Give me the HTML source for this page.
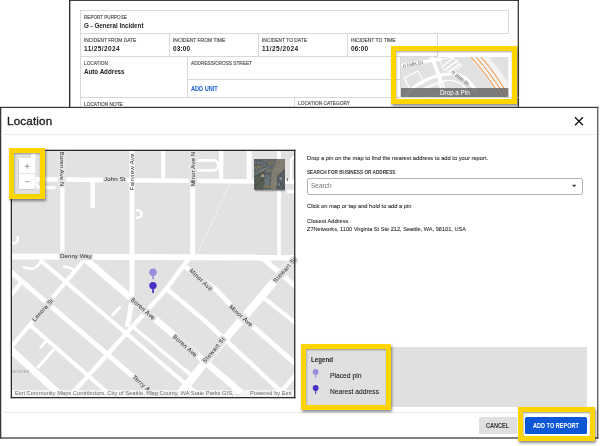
<!DOCTYPE html>
    <html><head><meta charset="utf-8"><title>Location</title>
    <style>
    html,body{margin:0;padding:0;}
    body{width:600px;height:446px;position:relative;overflow:hidden;background:#fff;
     font-family:"Liberation Sans",sans-serif;}
    .b{position:absolute;box-sizing:content-box;}
    .t{opacity:0.999;position:absolute;white-space:nowrap;line-height:1;}
    .s{transform-origin:0 0;transform:scale(0.25);}
    .rl{transform-origin:50% 50%;}
    .yb{box-shadow:0.5px 1.5px 2.5px rgba(0,0,0,0.45), inset 0.5px 1px 2px rgba(0,0,0,0.35);}
    svg{position:absolute;left:0;top:0;overflow:hidden;}
    </style></head><body>
    <svg width="600" height="110" viewBox="0 0 600 110"><g fill="#2a2a2a"><rect x="69" y="0" width="1.35" height="108"/><rect x="69" y="0" width="450" height="0.9"/><rect x="517.7" y="0" width="1.2" height="108"/></g></svg>
<div class="b" style="left:80px;top:10px;width:428px;height:23px;border:1px solid #d9d9d9;width:427px;height:22px;"></div>
<div class="b" style="left:80px;top:33px;width:357px;height:23px;border:1px solid #d9d9d9;border-top:none;width:356px;height:23px;"></div>
<div class="b" style="left:169px;top:33px;width:1px;height:23px;background:#d9d9d9;"></div>
<div class="b" style="left:258px;top:33px;width:1px;height:23px;background:#d9d9d9;"></div>
<div class="b" style="left:347px;top:33px;width:1px;height:23px;background:#d9d9d9;"></div>
<div class="b" style="left:80px;top:56px;width:321px;height:41px;border-left:1px solid #d9d9d9;border-bottom:1px solid #d9d9d9;width:320px;height:41px;"></div>
<div class="b" style="left:187px;top:56px;width:1px;height:41px;background:#d9d9d9;"></div>
<div class="b" style="left:188px;top:79px;width:212px;height:1px;background:#d9d9d9;"></div>
<div class="b" style="left:399.5px;top:56px;width:1.0px;height:41px;background:#d9d9d9;"></div>
<div class="b" style="left:80px;top:97px;width:1px;height:10px;background:#d9d9d9;"></div>
<div class="b" style="left:294px;top:97px;width:1px;height:10px;background:#d9d9d9;"></div>
<div class="b" style="left:80px;top:97px;width:439px;height:1px;background:#d9d9d9;"></div>
<span class="t s" style="left:84.00px;top:14.06px;font-size:22.40px;color:#5a5a5a;transform:scale(0.2056,0.25);-webkit-text-stroke:0.80px #5a5a5a;">REPORT PURPOSE</span>
<span class="t s" style="left:84.00px;top:21.80px;font-size:26.00px;color:#222;transform:scale(0.2408,0.25);font-weight:bold;">G - General Incident</span>
<span class="t s" style="left:84.00px;top:37.16px;font-size:22.40px;color:#5a5a5a;transform:scale(0.2163,0.25);-webkit-text-stroke:0.80px #5a5a5a;">INCIDENT FROM DATE</span>
<span class="t s" style="left:84.00px;top:44.90px;font-size:26.00px;color:#222;font-weight:bold;letter-spacing:1.477px;">11/25/2024</span>
<span class="t s" style="left:173.00px;top:37.16px;font-size:22.40px;color:#5a5a5a;transform:scale(0.2205,0.25);-webkit-text-stroke:0.80px #5a5a5a;">INCIDENT FROM TIME</span>
<span class="t s" style="left:173.00px;top:44.90px;font-size:26.00px;color:#222;font-weight:bold;letter-spacing:0.475px;">03:00</span>
<span class="t s" style="left:262.00px;top:37.16px;font-size:22.40px;color:#5a5a5a;transform:scale(0.2183,0.25);-webkit-text-stroke:0.80px #5a5a5a;">INCIDENT TO DATE</span>
<span class="t s" style="left:262.00px;top:44.90px;font-size:26.00px;color:#222;font-weight:bold;letter-spacing:1.789px;">11/25/2024</span>
<span class="t s" style="left:351.20px;top:37.16px;font-size:22.40px;color:#5a5a5a;transform:scale(0.2212,0.25);-webkit-text-stroke:0.80px #5a5a5a;">INCIDENT TO TIME</span>
<span class="t s" style="left:351.20px;top:44.90px;font-size:26.00px;color:#222;font-weight:bold;letter-spacing:0.575px;">06:00</span>
<span class="t s" style="left:84.00px;top:59.86px;font-size:22.40px;color:#5a5a5a;transform:scale(0.2128,0.25);-webkit-text-stroke:0.80px #5a5a5a;">LOCATION</span>
<span class="t s" style="left:84.00px;top:68.40px;font-size:26.00px;color:#222;transform:scale(0.2389,0.25);font-weight:bold;">Auto Address</span>
<span class="t s" style="left:191.00px;top:60.06px;font-size:22.40px;color:#5a5a5a;transform:scale(0.2113,0.25);-webkit-text-stroke:0.80px #5a5a5a;">ADDRESS/CROSS STREET</span>
<span class="t s" style="left:191.00px;top:86.28px;font-size:25.60px;color:#1a5fd0;transform:scale(0.2183,0.25);font-weight:bold;">ADD UNIT</span>
<span class="t s" style="left:84.00px;top:100.66px;font-size:22.40px;color:#5a5a5a;transform:scale(0.2141,0.25);-webkit-text-stroke:0.80px #5a5a5a;">LOCATION NOTE</span>
<span class="t s" style="left:298.00px;top:100.46px;font-size:22.40px;color:#5a5a5a;transform:scale(0.2143,0.25);-webkit-text-stroke:0.80px #5a5a5a;">LOCATION CATEGORY</span>
<svg width="600" height="110" viewBox="0 0 600 110">
    <defs><clipPath id="tc"><rect x="401" y="57" width="107.3" height="40"/></clipPath></defs>
    <g clip-path="url(#tc)">
    <rect x="401" y="57" width="108" height="41" fill="#e1e1e1"/>
    <g fill="none" stroke="#fff" stroke-linecap="round">
    <path d="M398 66 L440 59" stroke-width="3"/>
    <path d="M432 57 L441 82 L446 100" stroke-width="4"/>
    <path d="M404 100 C412 84 430 76 448 74 C462 72 470 80 476 92" stroke-width="3.2"/>
    <path d="M440 82 C452 78 462 82 468 92" stroke-width="1.4"/>
    <path d="M404 78 L418 71 L424 83 L410 89 Z" stroke-width="1.1"/>
    <path d="M424 88 L438 82 L442 92 L430 97" stroke-width="1.1"/>
    <path d="M415 100 C420 90 432 84 444 84" stroke-width="1"/>
    <path d="M440 60 L452 57 L462 66 L452 72 L444 70 Z" stroke-width="1"/>
    <path d="M443 66 L453 58 M446 69 L457 61 M450 71 L460 64" stroke-width="1.6"/>
    <path d="M479 57 Q493.5 73 508.5 97.5" stroke-width="15" stroke="#f3f3f3"/>
    </g>
    <g fill="none" stroke="#f0984a" stroke-width="1.05">
    <path d="M471 57 Q486 73.5 501.3 97.5"/>
    <path d="M476 57 Q490.5 73 505.5 97.5"/>
    <path d="M481 57 Q495.5 73 509.5 97.5"/>
    </g>
    <path d="M441 83 C444 90 446 95 447 100" fill="none" stroke="#b9d0e6" stroke-width="0.6"/>
    <rect x="401" y="88" width="108" height="9.2" fill="rgba(98,98,98,0.8)"/>
    </g>
    </svg>
    <span class="t rl" style="left:459.80px;top:78.30px;font-size:19.20px;color:#555;transform:translate(-50%,-50%) rotate(38deg) scale(0.2500,0.25);letter-spacing:0.500px;margin-right:-0.500px;">N 85th St</span>
<span class="t rl" style="left:412.80px;top:63.60px;font-size:19.20px;color:#555;transform:translate(-50%,-50%) rotate(-11deg) scale(0.2500,0.25);letter-spacing:0.512px;margin-right:-0.512px;">rt Hills Dr</span>
<span class="t s" style="left:439.60px;top:89.40px;font-size:26.00px;color:#fff;transform:scale(0.2418,0.25);">Drop a Pin</span>
<div class="b yb" style="left:390.8px;top:46.2px;width:116.00000000000003px;height:47.99999999999999px;border:5.2px solid #ffd500;"></div>
<div class="b" style="left:0px;top:107px;width:598px;height:331px;background:#fff;"></div>
<svg width="600" height="446" viewBox="0 0 600 446"><g fill="#383838"><rect x="0" y="106.8" width="598.4" height="1.25"/><rect x="0" y="106.8" width="1.3" height="331.9"/><rect x="597.1" y="106.8" width="1.3" height="331.9" fill="#555"/><rect x="0" y="437.35" width="598.4" height="1.35" fill="#444"/></g></svg>
<div class="b" style="left:1px;top:134px;width:596px;height:1px;background:#ececec;"></div>
<div class="b" style="left:1px;top:411.6px;width:596px;height:1.0px;background:#ececec;"></div>
<span class="t s" style="left:7.00px;top:115.08px;font-size:46.40px;color:#222;letter-spacing:0.771px;-webkit-text-stroke:1.40px #222;">Location</span>
<svg width="600" height="446" viewBox="0 0 600 446" style="pointer-events:none">
    <path d="M575 117.2 L583 125.2 M583 117.2 L575 125.2" stroke="#111" stroke-width="1.25" fill="none"/>
    <path d="M572 184.8 L576.4 184.8 L574.2 187.2 Z" fill="#444"/>
    </svg>
    <span class="t s" style="left:307.00px;top:155.02px;font-size:24.00px;color:#2e2e2e;transform:scale(0.2389,0.25);-webkit-text-stroke:0.40px #2e2e2e;">Drop a pin on the map to find the nearest address to add to your report.</span>
<span class="t s" style="left:307.00px;top:169.21px;font-size:21.20px;color:#2e2e2e;transform:scale(0.2206,0.25);font-weight:bold;">SEARCH FOR BUSINESS OR ADDRESS</span>
<div class="b" style="left:306.7px;top:177.7px;width:277.3px;height:16.80000000000001px;border:1px solid #b2b2b2;border-radius:2px;width:274.4px;height:14.9px;"></div>
<span class="t s" style="left:310.70px;top:181.97px;font-size:28.00px;color:#777;transform:scale(0.2322,0.25);">Search</span>
<span class="t s" style="left:307.00px;top:203.12px;font-size:24.00px;color:#2e2e2e;transform:scale(0.2388,0.25);-webkit-text-stroke:0.40px #2e2e2e;">Click on map or tap and hold to add a pin</span>
<span class="t s" style="left:307.00px;top:218.05px;font-size:24.80px;color:#2e2e2e;transform:scale(0.2311,0.25);-webkit-text-stroke:0.40px #2e2e2e;">Closest Address</span>
<span class="t s" style="left:307.00px;top:225.95px;font-size:24.80px;color:#2e2e2e;transform:scale(0.2263,0.25);-webkit-text-stroke:0.40px #2e2e2e;">Z7Networks, 1100 Virginia St Ste 212, Seattle, WA, 98101, USA</span>
<div class="b" style="left:306px;top:347px;width:281px;height:60px;background:#e0e0e0;"></div>
<span class="t s" style="left:311.00px;top:356.07px;font-size:28.00px;color:#222;transform:scale(0.2200,0.25);font-weight:bold;">Legend</span>
<span class="t s" style="left:330.00px;top:371.82px;font-size:29.20px;color:#222;transform:scale(0.2304,0.25);-webkit-text-stroke:0.40px #222;">Placed pin</span>
<span class="t s" style="left:330.00px;top:387.92px;font-size:29.20px;color:#222;transform:scale(0.2288,0.25);-webkit-text-stroke:0.40px #222;">Nearest address</span>
<svg width="600" height="446" viewBox="0 0 600 446">
    <g><circle cx="315.65" cy="371.9" r="2.9" fill="#9c8bdc"/><rect x="315.1" y="373" width="1.1" height="4.9" fill="#9c8bdc"/></g>
    <g><circle cx="315.65" cy="388" r="2.9" fill="#4a2fc4"/><rect x="315.1" y="389" width="1.1" height="4.8" fill="#4a2fc4"/></g>
    </svg>
    <div class="b yb" style="left:300.6px;top:343.8px;width:79.99999999999997px;height:55.79999999999999px;border:5.2px solid #ffd500;"></div>
<div class="b" style="left:478.7px;top:417px;width:37.900000000000034px;height:17.399999999999977px;background:#e0e0e0;border-radius:1.5px;"></div>
<span class="t s" style="left:486.30px;top:423.08px;font-size:25.60px;color:#333;transform:scale(0.2176,0.25);font-weight:bold;">CANCEL</span>
<div class="b" style="left:525px;top:417.2px;width:62px;height:17.0px;background:#0b57d6;border-radius:1.5px;"></div>
<span class="t s" style="left:532.80px;top:423.07px;font-size:25.20px;color:#fff;transform:scale(0.2211,0.25);font-weight:bold;">ADD TO REPORT</span>
<div class="b yb" style="left:517.5px;top:407.2px;width:67.30000000000004px;height:24.200000000000024px;border:5.2px solid #ffd500;"></div>
<svg width="600" height="446" viewBox="0 0 600 446">
<defs><clipPath id="mc"><rect x="11.5" y="150.5" width="282.8" height="247"/></clipPath></defs>
<g clip-path="url(#mc)">
<rect x="11" y="150" width="285" height="249" fill="#e2e2e2"/>
<g fill="none" stroke="#fff" stroke-linecap="butt">
<!-- north grid -->
<path d="M34 179.3 L296 181.8" stroke-width="4.5"/>
<path d="M62.4 150 V256" stroke-width="4.5"/>
<path d="M33.4 150 V179" stroke-width="4.5"/>
<path d="M132 150 V290 C132 305 130 315 127 327" stroke-width="5"/>
<path d="M192.7 150 V256" stroke-width="5"/>
<path d="M92.8 181 V208.3" stroke-width="4.4"/>
<path d="M163.2 150 V179" stroke-width="4"/>
<path d="M195 160.4 H213 C220 160.4 220 170.4 213 170.4 H195" stroke-width="2.6"/>
<path d="M221.2 150 V179" stroke-width="4.4"/>
<path d="M249.2 150 V179" stroke-width="5"/>
<path d="M279 150 V256" stroke-width="3.7"/>
<path d="M296 156.8 C292 156.8 291 159 291 163 V180" stroke-width="2.3"/>
<path d="M287 191.5 H296" stroke-width="3.6"/>
<path d="M11 256.6 L296 257.6" stroke-width="6"/>
<path d="M230.4 183 L196.5 255" stroke-width="0.7" stroke-dasharray="3 1.5"/>
<path d="M35.8 181 C35.8 186 37.2 187.6 41 187.6 H55.6" stroke-width="3.2"/>
<path d="M136 210.3 C143.5 209.5 143.5 218.5 136 217.8" stroke-width="2.3"/>
<path d="M17.7 236 V240 C17.7 243 15 243.5 11 243.2" stroke-width="2.3"/>
<!-- south diagonal grid: NW-SE -->
<path d="M262 257.5 L297 287.7" stroke-width="5"/>
<path d="M264.7 298.7 L297 323.9" stroke-width="4"/>
<path d="M185.6 267 L216.5 290 L241 316 L293.3 361.8 L297 365" stroke-width="5" stroke-linejoin="round"/>
<path d="M167.3 289.5 L204 320 L279.2 390 L282 392.6" stroke-width="4.5" stroke-linejoin="round"/>
<path d="M85 258.7 L241 392.6" stroke-width="6.6"/>
<path d="M132 326 L190.5 374.6" stroke-width="3.4"/>
<path d="M40 260 L196 392.8" stroke-width="4"/>
<path d="M9 270.3 L152 392.7" stroke-width="5"/>
<path d="M30.5 325.4 L108 392.9" stroke-width="4"/>
<path d="M6 345.4 L58 393" stroke-width="7"/>
<!-- NE-SW -->
<path d="M85.5 258.5 L9 349.5" stroke-width="4"/>
<path d="M188.5 259 L165.5 290 L73 392.5" stroke-width="4.5" stroke-linejoin="round"/>
<path d="M293.2 259.5 L237.1 325 L205.6 361.5 L182.8 390 L180.4 393" stroke-width="7.8" stroke-linejoin="round"/>
<path d="M297 373 L280 393" stroke-width="4"/>
<path d="M22 281.5 L9 298" stroke-width="4"/>
<path d="M46 341 L40 348.2" stroke-width="2.8"/>
<path d="M54 349.3 L37.3 368" stroke-width="3.2"/>
<path d="M120.5 306.5 L112 315.8" stroke-width="3"/>
<path d="M22.7 266.8 C28 268 31 270 34.5 268 C37.5 266.5 38.5 264.5 41 262" stroke-width="2.4"/>
<path d="M63 266.8 C68 267 73.5 267.5 75 272.5" stroke-width="2.4"/>
</g>
<rect x="286.9" y="178.2" width="0.9" height="2.8" fill="#555"/>
<!-- pins -->
<g><rect x="152.2" y="273" width="1.7" height="6.2" fill="#9c8bdc"/><circle cx="153" cy="272.2" r="3.7" fill="#9c8bdc"/></g>
<g><rect x="152.2" y="286" width="1.7" height="7" fill="#4a2fc4"/><circle cx="153" cy="285.6" r="3.7" fill="#4a2fc4"/></g>
</g>
</svg>
<span class="t rl" style="left:62.20px;top:168.80px;font-size:24.80px;color:#3c3c3c;transform:translate(-50%,-50%) rotate(90deg) scale(0.2500,0.25);letter-spacing:0.122px;margin-right:-0.122px;-webkit-text-stroke:0.20px #3c3c3c;background:#e6e6e6;box-shadow:0 0 0 4.4px #e6e6e6;border-radius:6px;">Boren Ave N</span>
<span class="t rl" style="left:131.70px;top:171.80px;font-size:24.80px;color:#3c3c3c;transform:translate(-50%,-50%) rotate(-90deg) scale(0.2500,0.25);letter-spacing:0.716px;margin-right:-0.716px;-webkit-text-stroke:0.20px #3c3c3c;">Fairview Ave</span>
<span class="t rl" style="left:192.50px;top:169.20px;font-size:24.80px;color:#3c3c3c;transform:translate(-50%,-50%) rotate(-90deg) scale(0.2500,0.25);letter-spacing:0.339px;margin-right:-0.339px;-webkit-text-stroke:0.20px #3c3c3c;background:#e4e4e4;box-shadow:0 0 0 4.4px #e4e4e4;border-radius:6px;">Minor Ave N</span>
<span class="t s" style="left:104.30px;top:176.45px;font-size:24.80px;color:#3c3c3c;letter-spacing:0.184px;-webkit-text-stroke:0.20px #3c3c3c;background:#e2e2e2;box-shadow:0 0 0 4.4px #e2e2e2;border-radius:6px;">John St</span>
<span class="t s" style="left:59.80px;top:252.85px;font-size:24.80px;color:#3c3c3c;letter-spacing:0.044px;-webkit-text-stroke:0.20px #3c3c3c;background:#e2e2e2;box-shadow:0 0 0 4.4px #e2e2e2;border-radius:6px;">Denny Way</span>
<span class="t rl" style="left:43.40px;top:309.50px;font-size:23.60px;color:#3c3c3c;transform:translate(-50%,-50%) rotate(-48deg) scale(0.2500,0.25);letter-spacing:1.209px;margin-right:-1.209px;-webkit-text-stroke:0.20px #3c3c3c;background:#e2e2e2;box-shadow:0 0 0 4.4px #e2e2e2;border-radius:6px;">Lenora St</span>
<span class="t rl" style="left:142.50px;top:308.50px;font-size:23.60px;color:#3c3c3c;transform:translate(-50%,-50%) rotate(42deg) scale(0.2500,0.25);letter-spacing:1.443px;margin-right:-1.443px;-webkit-text-stroke:0.20px #3c3c3c;background:#e2e2e2;box-shadow:0 0 0 4.4px #e2e2e2;border-radius:6px;">Boren Ave</span>
<span class="t rl" style="left:184.60px;top:345.50px;font-size:23.60px;color:#3c3c3c;transform:translate(-50%,-50%) rotate(42deg) scale(0.2500,0.25);letter-spacing:1.443px;margin-right:-1.443px;-webkit-text-stroke:0.20px #3c3c3c;background:#e2e2e2;box-shadow:0 0 0 4.4px #e2e2e2;border-radius:6px;">Boren Ave</span>
<span class="t rl" style="left:200.50px;top:279.50px;font-size:23.60px;color:#3c3c3c;transform:translate(-50%,-50%) rotate(44deg) scale(0.2500,0.25);letter-spacing:1.439px;margin-right:-1.439px;-webkit-text-stroke:0.20px #3c3c3c;background:#e2e2e2;box-shadow:0 0 0 4.4px #e2e2e2;border-radius:6px;">Minor Ave</span>
<span class="t rl" style="left:241.00px;top:315.50px;font-size:23.60px;color:#3c3c3c;transform:translate(-50%,-50%) rotate(42deg) scale(0.2500,0.25);letter-spacing:1.439px;margin-right:-1.439px;-webkit-text-stroke:0.20px #3c3c3c;background:#e2e2e2;box-shadow:0 0 0 4.4px #e2e2e2;border-radius:6px;">Minor Ave</span>
<span class="t rl" style="left:284.50px;top:269.50px;font-size:23.60px;color:#3c3c3c;transform:translate(-50%,-50%) rotate(-48deg) scale(0.2500,0.25);letter-spacing:1.684px;margin-right:-1.684px;-webkit-text-stroke:0.20px #3c3c3c;background:#e2e2e2;box-shadow:0 0 0 4.4px #e2e2e2;border-radius:6px;">Stewart St</span>
<span class="t rl" style="left:213.80px;top:349.60px;font-size:23.60px;color:#3c3c3c;transform:translate(-50%,-50%) rotate(-50deg) scale(0.2500,0.25);letter-spacing:1.684px;margin-right:-1.684px;-webkit-text-stroke:0.20px #3c3c3c;background:#e2e2e2;box-shadow:0 0 0 4.4px #e2e2e2;border-radius:6px;">Stewart St</span>
<span class="t rl" style="left:143.50px;top:385.50px;font-size:23.60px;color:#3c3c3c;transform:translate(-50%,-50%) rotate(42deg) scale(0.2500,0.25);letter-spacing:1.760px;margin-right:-1.760px;-webkit-text-stroke:0.20px #3c3c3c;background:#e2e2e2;box-shadow:0 0 0 4.4px #e2e2e2;border-radius:6px;">Terry Ave</span>
<span class="t s" style="left:11.50px;top:368.23px;font-size:21.60px;color:#a9a9a9;letter-spacing:0.266px;">ervices</span>
<div class="b" style="left:12px;top:390px;width:282px;height:7.300000000000011px;background:rgba(255,255,255,0.62);"></div>
<span class="t s" style="left:14.70px;top:390.15px;font-size:24.80px;color:#6a6a6a;transform:scale(0.2319,0.25);">Esri Community Maps Contributors, City of Seattle, King County, WA State Parks GIS, ...</span>
<span class="t s" style="left:249.70px;top:390.15px;font-size:24.80px;color:#6a6a6a;transform:scale(0.2304,0.25);">Powered by Esri</span>
<svg width="600" height="446" viewBox="0 0 600 446"><g fill="#2b2b2b"><rect x="10.7" y="149.7" width="284.7" height="1.3"/><rect x="10.7" y="149.7" width="1.3" height="248.6"/><rect x="294.1" y="149.7" width="1.3" height="248.6"/><rect x="10.7" y="397" width="284.7" height="1.3"/></g></svg>
<svg width="600" height="446" viewBox="0 0 600 446">
<defs><clipPath id="sc"><rect x="254" y="158.9" width="30.9" height="30.7"/></clipPath>
<filter id="sb" x="-10%" y="-10%" width="120%" height="120%"><feGaussianBlur stdDeviation="0.55"/></filter>
<filter id="sn" x="0" y="0" width="100%" height="100%">
<feTurbulence type="fractalNoise" baseFrequency="0.45" numOctaves="2" seed="7" result="n"/>
<feColorMatrix in="n" type="matrix" values="0 0 0 0 0.3  0 0 0 0 0.3  0 0 0 0 0.3  0.9 0.9 0.9 0 -0.9"/>
</filter></defs>
<rect x="255.2" y="161" width="29.5" height="30.3" fill="rgba(0,0,0,0.30)" filter="url(#sb)"/>
<g clip-path="url(#sc)">
<rect x="254" y="158" width="32" height="32" fill="#454f4e"/>
<g filter="url(#sb)">
<rect x="254" y="158" width="20" height="14" fill="#4f595b"/>
<path d="M254 176 L264 171 L264 190 L254 190 Z" fill="#3c4a3c"/>
<path d="M286 158 L277 158 C275.5 165 272 169 271.3 175 C270.6 181 271 186 271 191 L276.5 191 C276 184 278.5 177 282 172 L286 167 Z" fill="#7b7768"/>
<path d="M277 176 L286 168 L286 190 L277 190 Z" fill="#3f4a4f"/>
<rect x="261.2" y="174.3" width="2.9" height="2.9" fill="#b39b78"/>
<rect x="264.5" y="175" width="5.5" height="13" fill="#5a676c"/>
<path d="M254 174.5 L268 167.5" stroke="#7c857c" stroke-width="1" fill="none"/>
<rect x="268.5" y="161.5" width="5.5" height="2.4" fill="#7a6a3c"/>
<rect x="254.5" y="166" width="7.5" height="1.6" fill="#7a6a3c"/>
<rect x="266" y="169.6" width="8.5" height="1.5" fill="#746a46"/>
<rect x="263.5" y="185.8" width="10.5" height="1.7" fill="#85744a"/>
<circle cx="281" cy="178.5" r="1.6" fill="#87939a"/>
<circle cx="279" cy="184.5" r="1.2" fill="#76828a"/>
</g>
<rect x="254" y="158" width="32" height="32" filter="url(#sn)" opacity="0.55"/>
</g>
</svg>
<div class="b" style="left:19.1px;top:158.3px;width:16.0px;height:30.69999999999999px;background:#fff;box-shadow:0 0.5px 1.5px rgba(0,0,0,0.25);"></div>
<div class="b" style="left:19.1px;top:173.3px;width:16.0px;height:0.5999999999999943px;background:#e6e6e6;"></div>
<svg width="60" height="210" viewBox="0 0 60 210">
    <path d="M24.7 166.3 H29.7 M27.2 163.8 V168.8 M24.9 181.7 H29.5" stroke="#757575" stroke-width="0.65" fill="none"/>
    </svg>
    <div class="b yb" style="left:8.9px;top:147.7px;width:25.800000000000004px;height:41.80000000000002px;border:5.2px solid #ffd500;"></div>
</body></html>
